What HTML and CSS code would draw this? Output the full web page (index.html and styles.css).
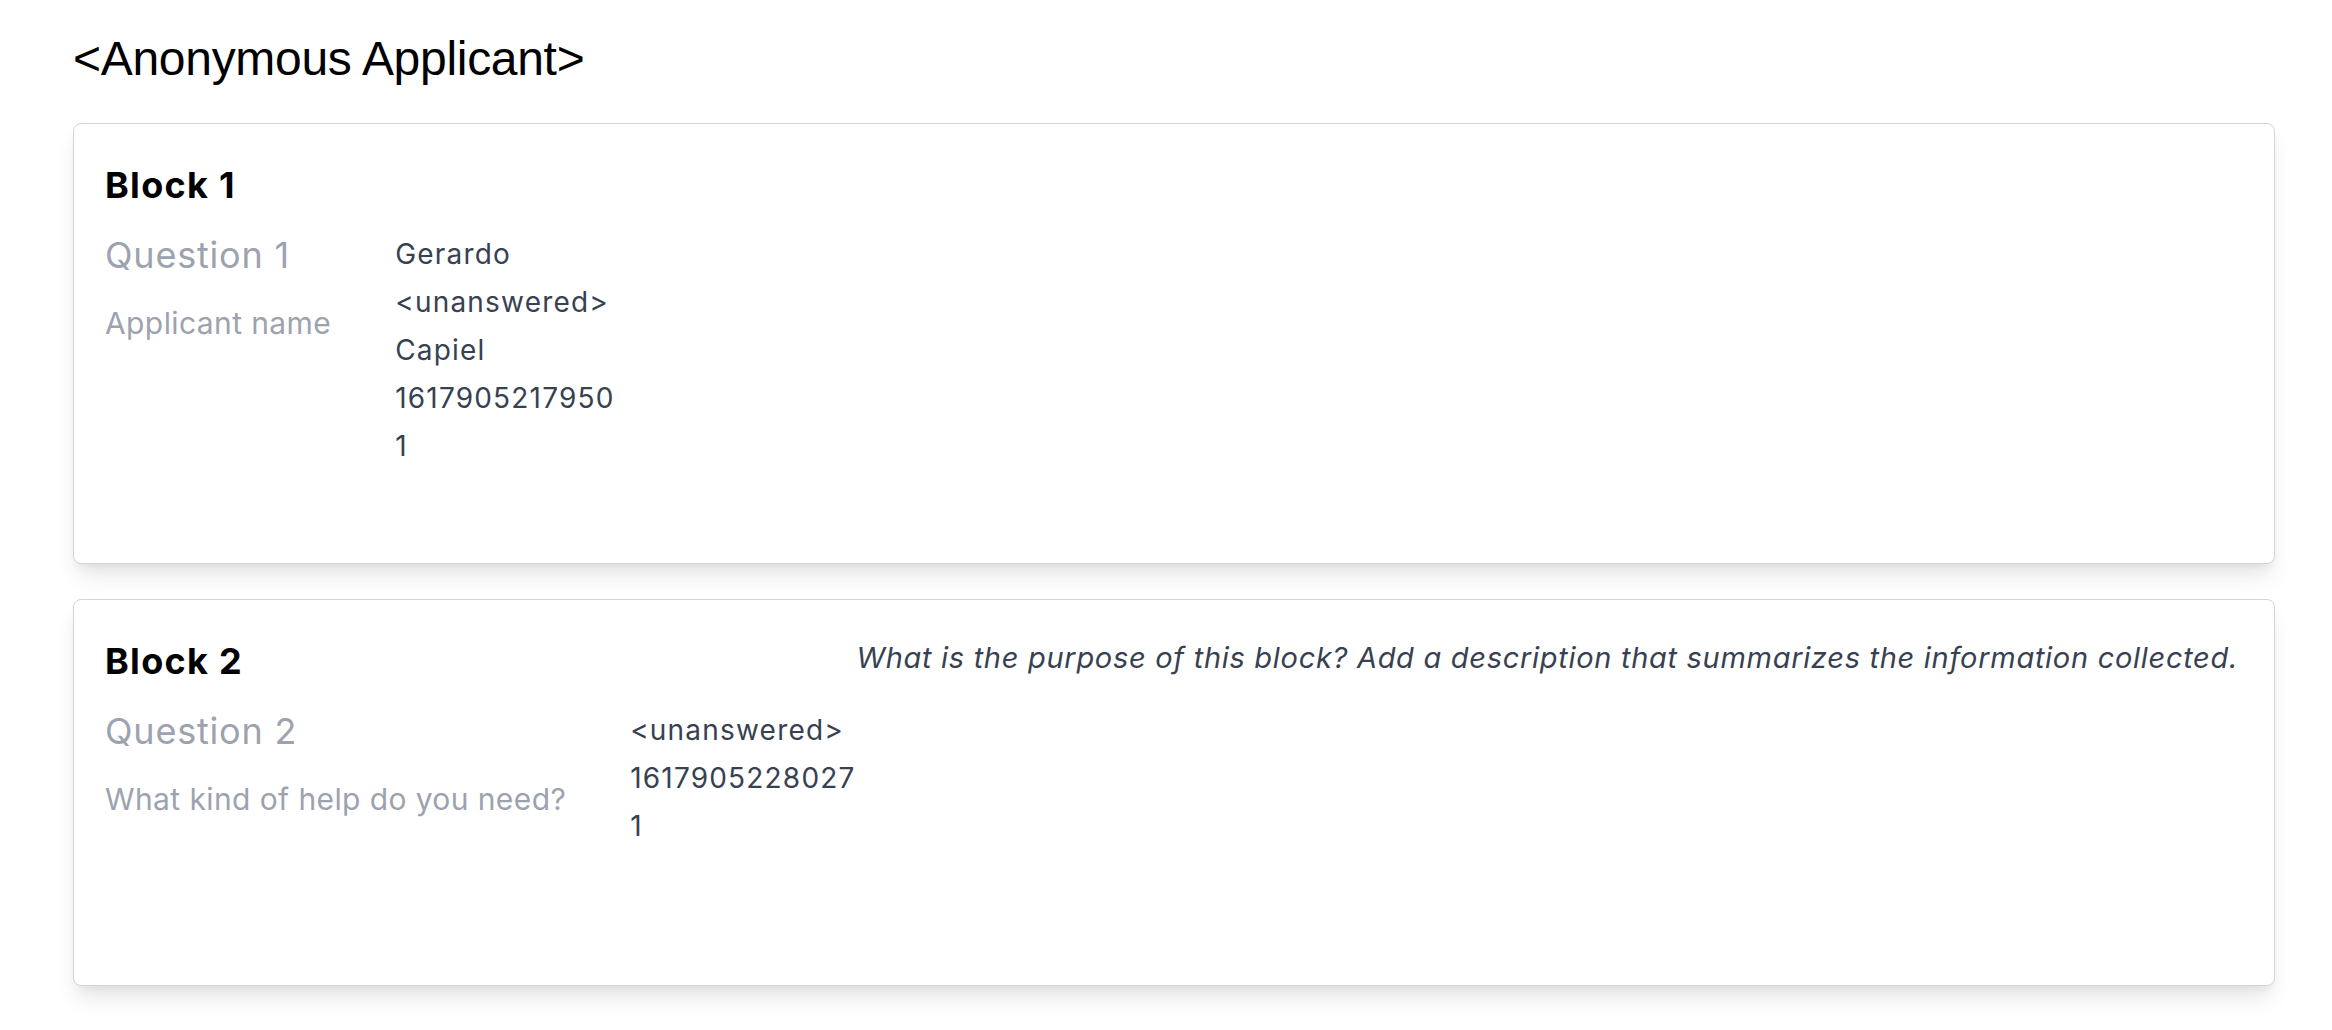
FILE: index.html
```html
<!DOCTYPE html>
<html lang="en">
<head>
<meta charset="utf-8">
<title>Anonymous Applicant</title>
<link rel="stylesheet" href="styles.css">
</head>
<body>
<main class="page">
  <h1 class="applicant">&lt;Anonymous Applicant&gt;</h1>

  <section class="card card-first">
    <header class="block-head">
      <h2 class="block-title">Block 1</h2>
    </header>
    <div class="question-row">
      <div class="question-label">
        <div class="question-name">Question 1</div>
        <div class="question-text">Applicant name</div>
      </div>
      <div class="answers">
        <div class="answer">Gerardo</div>
        <div class="answer">&lt;unanswered&gt;</div>
        <div class="answer">Capiel</div>
        <div class="answer">1617905217950</div>
        <div class="answer">1</div>
      </div>
    </div>
  </section>

  <section class="card">
    <header class="block-head">
      <h2 class="block-title">Block 2</h2>
      <p class="block-desc">What is the purpose of this block? Add a description that summarizes the information collected.</p>
    </header>
    <div class="question-row">
      <div class="question-label">
        <div class="question-name">Question 2</div>
        <div class="question-text">What kind of help do you need?</div>
      </div>
      <div class="answers">
        <div class="answer">&lt;unanswered&gt;</div>
        <div class="answer">1617905228027</div>
        <div class="answer">1</div>
      </div>
    </div>
  </section>
</main>
</body>
</html>
```

FILE: styles.css
```css
* {
  box-sizing: border-box;
}

html, body {
  margin: 0;
  padding: 0;
  background: #ffffff;
}

body {
  font-family: Inter, "Noto Sans", sans-serif;
  color: #374151;
}

.page {
  padding: 31px 57px 40px 73px;
}

.applicant {
  margin: 0;
  font-family: "Liberation Sans", Arial, sans-serif;
  font-weight: 400;
  font-size: 48px;
  line-height: 55px;
  letter-spacing: -0.3px;
  color: #000000;
}

.card {
  margin-top: 35px;
  min-height: 387px;
  padding: 38px 36px 93px 31px;
  border: 1px solid #d1d5db;
  border-radius: 8px;
  background: #ffffff;
  box-shadow: 0 15px 22px -4px rgba(0, 0, 0, 0.10), 0 6px 9px -3px rgba(0, 0, 0, 0.05);
}

.card-first {
  margin-top: 37px;
}

.block-head {
  display: flex;
  justify-content: space-between;
  align-items: flex-start;
  gap: 32px;
}

.block-title {
  margin: 0;
  font-size: 36px;
  line-height: 47px;
  font-weight: 700;
  color: #000000;
  letter-spacing: 1.3px;
}

.block-desc {
  margin: 0;
  font-size: 29px;
  line-height: 40px;
  letter-spacing: 0.7px;
  font-style: italic;
  color: #374151;
  text-align: right;
}

.question-row {
  display: flex;
  align-items: flex-start;
  gap: 64px;
  margin-top: 21px;
}

.question-label {
  padding-top: 1px;
  color: #9ca3af;
}

.question-name {
  font-size: 36px;
  line-height: 48px;
  letter-spacing: 0.8px;
}

.question-text {
  margin-top: 22px;
  font-size: 30px;
  line-height: 45px;
  letter-spacing: 0.4px;
}

.answer {
  font-size: 28px;
  line-height: 48px;
  letter-spacing: 1.2px;
}
```
